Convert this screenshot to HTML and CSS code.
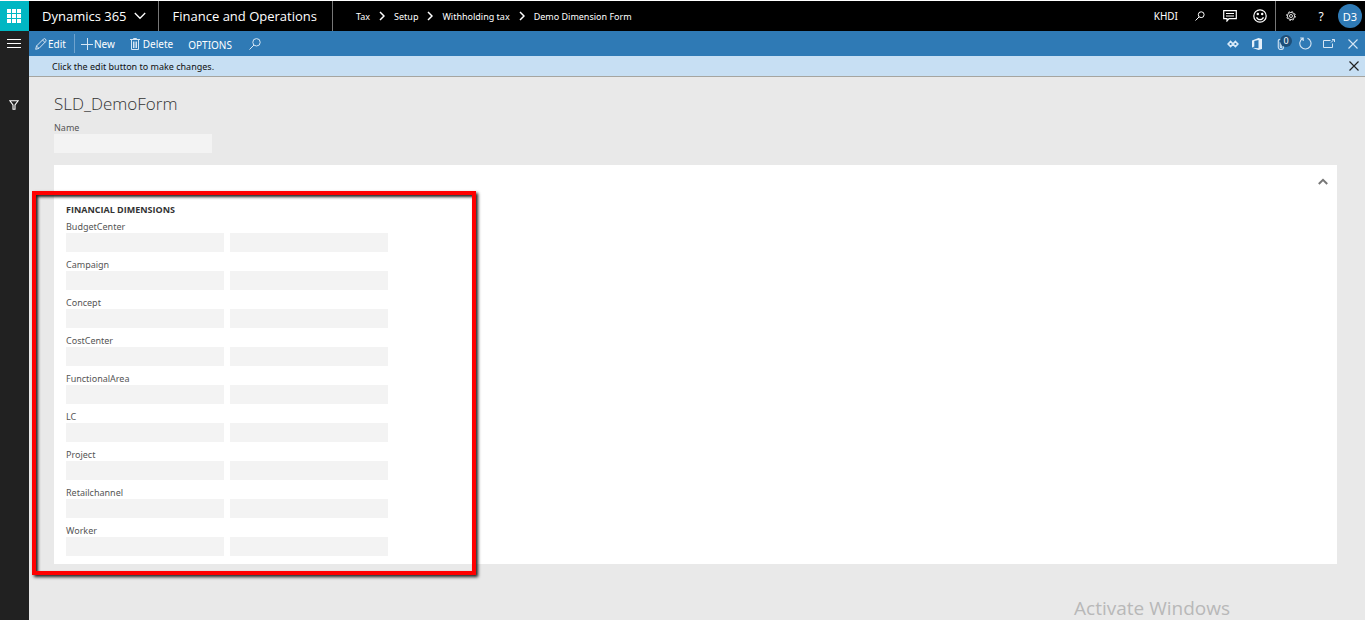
FILE: index.html
```html
<!DOCTYPE html>
<html lang="en">
<head>
<meta charset="utf-8">
<title>Demo Dimension Form - Finance and Operations</title>
<link rel="stylesheet" href="styles.css">
</head>
<body>
<div class="app">
  <header class="topbar">
    <button class="launcher" aria-label="App launcher">
      <svg width="14" height="14" viewBox="0 0 14 14" fill="#fff"><path d="M0 0h4v4H0zM5 0h4v4H5zM10 0h4v4h-4zM0 5h4v4H0zM5 5h4v4H5zM10 5h4v4h-4zM0 10h4v4H0zM5 10h4v4H5zM10 10h4v4h-4z"/></svg>
    </button>
    <button class="brand">Dynamics 365
      <svg width="12" height="8" viewBox="0 0 12 8" fill="none" stroke="#fff" stroke-width="1.3"><path d="M.8 1 6 6.300 11.200 1"/></svg>
    </button>
    <a class="product" href="#">Finance and Operations</a>
    <nav class="crumbs" aria-label="Breadcrumb">
      <a href="#">Tax</a>
      <svg width="6" height="10" viewBox="0 0 6 10"><path d="M1 1l4 4-4 4"/></svg>
      <a href="#">Setup</a>
      <svg width="6" height="10" viewBox="0 0 6 10"><path d="M1 1l4 4-4 4"/></svg>
      <a href="#">Withholding tax</a>
      <svg width="6" height="10" viewBox="0 0 6 10"><path d="M1 1l4 4-4 4"/></svg>
      <a href="#">Demo Dimension Form</a>
    </nav>
    <div class="tools">
      <button class="company">KHDI</button>
      <button class="tool" aria-label="Search"><svg width="10" height="10" viewBox="0 0 10 10" fill="none" stroke="#fff"><circle cx="6.200" cy="3.700" r="2.900"/><path d="M4 6 .5 9.500"/></svg></button>
      <button class="tool" aria-label="Messages"><svg width="14" height="12" viewBox="0 0 14 12" fill="none" stroke="#fff" stroke-width="1.200"><path d="M.7.7h12.600v8H6L4 11V8.700H.7zM3 3.500h8M3 6h8"/></svg></button>
      <button class="tool" aria-label="Feedback"><svg width="14" height="14" viewBox="0 0 14 14" fill="none" stroke="#fff" stroke-width="1.200"><circle cx="7" cy="7" r="6.200"/><path d="M3.600 8.200c1 3.200 5.800 3.200 6.800 0"/><circle cx="4.800" cy="5" r=".6" fill="#fff"/><circle cx="9.200" cy="5" r=".6" fill="#fff"/></svg></button>
      <span class="split"></span>
      <button class="tool" aria-label="Settings"><svg width="10" height="10" viewBox="0 0 10 10" fill="none" stroke="#ddd"><circle cx="5" cy="5" r="1.500"/><circle cx="5" cy="5" r="3.600"/><circle cx="5" cy="5" r="4.400" stroke-dasharray="1.700 1.756"/></svg></button>
      <button class="tool help" aria-label="Help">?</button>
      <button class="avatar">D3</button>
    </div>
  </header>

  <aside class="rail">
    <button aria-label="Navigation"><svg width="14" height="9" viewBox="0 0 14 9" stroke="#fff"><path d="M0 .5h14M0 4.500h14M0 8.500h14"/></svg></button>
    <button class="filter" aria-label="Filter"><svg width="10" height="10" viewBox="0 0 10 10" fill="none" stroke="#fff" stroke-width="1.100"><path d="M.9.800h8.200L6 5v4.300H4V5z"/></svg></button>
  </aside>

  <div class="workspace">
    <div class="actions">
      <button class="action edit"><svg width="12" height="12" viewBox="0 0 12 12" fill="none" stroke="#d6e6f4"><path d="M.7 11.300 1.500 8 8.500 1q1-.8 2 .2t.3 2.200L4 10.400zM7.500 2l2.500 2.500M1.500 8 4 10.400"/></svg>Edit</button>
      <button class="action new"><svg width="12" height="12" viewBox="0 0 12 12" stroke="#d6e6f4"><path d="M6.500 0v12M0 6.500h12"/></svg>New</button>
      <button class="action delete"><svg width="10" height="12" viewBox="0 0 10 12" fill="none" stroke="#d6e6f4"><path d="M0 1.500h10M3.500 1.500v-1h3v1M1.500 2v9.500h7V2M3.500 3.500V10M5 3.500V10M6.500 3.500V10"/></svg>Delete</button>
      <button class="action options">OPTIONS</button>
      <button class="action" aria-label="Find"><svg width="12" height="12" viewBox="0 0 12 12" fill="none" stroke="#d6e6f4"><circle cx="7.500" cy="4.300" r="3.700"/><path d="M5 7 .5 11.500"/></svg></button>
      <div class="views">
        <button aria-label="Power Apps"><svg width="12" height="8" viewBox="0 0 12 8" fill="none" stroke="#d9eaf8" stroke-width="1.700"><path d="M3.600 1.500 6 4 3.600 6.500 1.200 4zM8.400 1.500 10.800 4 8.400 6.500 6 4z"/></svg></button>
        <button aria-label="Office"><svg width="10" height="12" viewBox="0 0 10 12" fill="#e4f0fa"><path d="M0 2.500 6.500 0 10 1v10l-3.500 1L0 9.700l6.500.6V2L2.300 3v5.500L0 9.500z"/></svg></button>
        <button class="attach" aria-label="Attachments"><svg width="8" height="12" viewBox="0 0 8 12" fill="none" stroke="#c5dcef" stroke-width="1.200"><path d="M6.500 4v5a2.600 2.600 0 0 1-5.200 0V3a1.700 1.700 0 0 1 3.400 0v6a.7.700 0 0 1-1.400 0V4"/></svg><span class="count">0</span></button>
        <button aria-label="Refresh"><svg width="13" height="13" viewBox="0 0 13 13" fill="none" stroke="#d6e6f4" stroke-width="1.100"><path d="M8.500 1.200a5.600 5.600 0 1 1-4.800.3M1.200 1h3v3"/></svg></button>
        <button aria-label="Open in new window"><svg width="12" height="9" viewBox="0 0 12 9" fill="none" stroke="#d6e6f4"><path d="M7.500 1.500H.5v7h9V4.500M8 3.500l3-3M9 .5H11.500V3"/></svg></button>
        <button aria-label="Close"><svg width="10" height="10" viewBox="0 0 10 10" stroke="#d6e6f4" stroke-width="1.100"><path d="M.5.5l9 9M9.500.5l-9 9"/></svg></button>
      </div>
    </div>
    <div class="notice">
      <span>Click the edit button to make changes.</span>
      <button aria-label="Dismiss"><svg width="10" height="10" viewBox="0 0 10 10" stroke="#222" stroke-width="1.200"><path d="M.5.5l9 9M9.500.5l-9 9"/></svg></button>
    </div>

    <main class="form">
      <h1>SLD_DemoForm</h1>
      <div class="name-field">
        <label for="name">Name</label>
        <input id="name" type="text" readonly>
      </div>
      <section class="panel">
        <button class="collapse" aria-label="Collapse"><svg width="10" height="7" viewBox="0 0 10 7" fill="none" stroke="#777" stroke-width="2"><path d="M.8 6 5 1.800 9.200 6"/></svg></button>
        <h2>FINANCIAL DIMENSIONS</h2>
        <div class="dimensions">
          <div class="dimension"><label for="d1">BudgetCenter</label><input id="d1" readonly><input aria-label="BudgetCenter description" readonly></div>
          <div class="dimension"><label for="d2">Campaign</label><input id="d2" readonly><input aria-label="Campaign description" readonly></div>
          <div class="dimension"><label for="d3">Concept</label><input id="d3" readonly><input aria-label="Concept description" readonly></div>
          <div class="dimension"><label for="d4">CostCenter</label><input id="d4" readonly><input aria-label="CostCenter description" readonly></div>
          <div class="dimension"><label for="d5">FunctionalArea</label><input id="d5" readonly><input aria-label="FunctionalArea description" readonly></div>
          <div class="dimension"><label for="d6">LC</label><input id="d6" readonly><input aria-label="LC description" readonly></div>
          <div class="dimension"><label for="d7">Project</label><input id="d7" readonly><input aria-label="Project description" readonly></div>
          <div class="dimension"><label for="d8">Retailchannel</label><input id="d8" readonly><input aria-label="Retailchannel description" readonly></div>
          <div class="dimension"><label for="d9">Worker</label><input id="d9" readonly><input aria-label="Worker description" readonly></div>
        </div>
        <div class="highlight"></div>
      </section>
      <div class="activation">Activate Windows</div>
    </main>
  </div>
</div>
</body>
</html>
```

FILE: styles.css
```css
* { box-sizing: border-box; }

body {
  margin: 0;
  background: #e9e9e9;
  color: #333;
  font-family: "Noto Sans", "Open Sans", sans-serif;
  font-size: 9px;
}

button {
  display: flex;
  align-items: center;
  justify-content: center;
  padding: 0;
  border: 0;
  background: none;
  color: inherit;
  font: inherit;
}

a { color: inherit; text-decoration: none; }
svg { display: block; flex: none; }

.app {
  display: grid;
  grid-template-columns: 29px minmax(0, 1fr);
  grid-template-rows: auto 1fr;
  min-height: 100vh;
  overflow: hidden;
}

.topbar {
  grid-column: 1 / -1;
  display: flex;
  height: 31px;
  border-top: 1px solid #fff;
  background: #000;
  color: #fff;
  white-space: nowrap;
}

.launcher { width: 29px; padding-right: 1px; background: #00b7c3; }

.brand, .product {
  display: flex;
  align-items: center;
  padding: 0 12px 0 13px;
  border-right: 1px solid #777;
  font-family: "Open Sans", sans-serif;
  font-size: 13px;
}
.brand { gap: 7px; }
.product { padding: 0 15px 0 14px; }

.crumbs {
  display: flex;
  align-items: center;
  gap: 9px;
  padding-left: 23px;
  font-size: 9px;
}
.crumbs svg { fill: none; stroke: #fff; stroke-width: 1.5; }

.tools {
  display: flex;
  align-items: center;
  margin-left: auto;
  padding-right: 3px;
}
.company { margin-right: 7px; font-size: 10px; }
.tool { width: 30px; height: 30px; }
.split { width: 1px; height: 30px; background: #777; }
.help { font-size: 12px; }
.avatar {
  width: 24px;
  height: 24px;
  margin-left: 2px;
  border-radius: 50%;
  background: #2f7ab5;
  font-size: 11px;
}

.rail {
  display: flex;
  flex-direction: column;
  gap: 36px;
  background: #212121;
}
.rail button { height: 25px; padding-right: 2px; }

.workspace { display: flex; flex-direction: column; }

.actions {
  display: flex;
  height: 25px;
  background: #2f7ab5;
  color: #fff;
  font-size: 10px;
}
.action { margin-right: 15px; }
.edit { gap: 1px; margin: 3px 0; padding: 0 8px 0 6px; border-right: 1px solid #6fa3ce; }
.new { gap: 1px; margin-left: 6px; }
.delete { gap: 3px; }
.options { margin-right: 17px; padding-top: 2px; }

.views {
  display: flex;
  margin-left: auto;
}
.views button { width: 24px; }
.views .attach { position: relative; padding-right: 0; }
.count {
  position: absolute;
  top: 4px;
  right: 1px;
  width: 12px;
  height: 12px;
  border-radius: 50%;
  background: #1d4e78;
  font-size: 9px;
  line-height: 12px;
  text-align: center;
}

.notice {
  display: flex;
  align-items: center;
  justify-content: space-between;
  height: 21px;
  padding: 0 6px 0 23px;
  border-bottom: 1px solid #a5a5a0;
  background: #c7dff3;
  color: #111;
}

.form {
  display: flex;
  flex: 1;
  flex-direction: column;
  padding: 15px 28px 0 25px;
}

h1 {
  margin: 0;
  font-family: "Open Sans", sans-serif;
  font-size: 17px;
  font-weight: 300;
  line-height: 24px;
}

label {
  display: block;
  height: 12px;
  color: #555;
  line-height: 12px;
}

input {
  display: block;
  width: 158px;
  height: 19px;
  padding: 0 4px;
  border: 0;
  background: #f3f3f3;
  font: inherit;
}

.name-field { padding: 6px 0 12px; }

.panel {
  position: relative;
  display: flex;
  flex-direction: column;
  padding: 9px 9px 8px 12px;
  background: #fff;
}

.collapse { align-self: flex-end; width: 10px; height: 14px; }

h2 {
  margin: 15px 0 5px;
  font-family: "Open Sans", sans-serif;
  font-size: 9px;
  font-weight: 700;
  line-height: 13px;
}

.dimensions { display: grid; gap: 7px; }
.dimension {
  display: grid;
  grid-template-columns: 158px 158px;
  column-gap: 6px;
}
.dimension label { grid-column: 1 / -1; }

.highlight {
  position: absolute;
  top: 26px;
  left: -22px;
  width: 444px;
  height: 384px;
  border: 4px solid #f00;
  box-shadow: 2px 2px 3px #222, inset 2px 2px 3px #222;
  pointer-events: none;
}

.activation {
  align-self: flex-end;
  margin: auto 107px 0 0;
  color: #b8b8b8;
  font-family: "Open Sans", sans-serif;
  font-size: 19px;
  line-height: 24px;
}
```
